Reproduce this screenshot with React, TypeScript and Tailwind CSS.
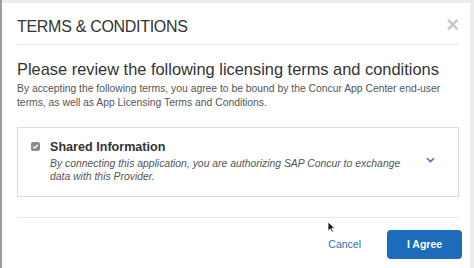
import React from "react";

export default function App() {
  return (
    <div
      className="relative w-[474px] h-[268px] bg-[#ececec] border-l-2 border-[#9d9d9d] pt-[3px] pr-[4px] overflow-hidden"
      style={{ fontFamily: '"Liberation Sans", Arial, sans-serif' }}
    >
      <div className="h-full bg-white pl-[15px] pr-[11px] flex flex-col">
        <div className="flex items-center justify-between h-[42px] border-b border-[#e5e5e5] pt-[6px]">
          <h1 className="text-[16px] leading-[22px] text-[#333] tracking-[-0.3px]">TERMS &amp; CONDITIONS</h1>
          <span className="text-[#c8c8c8] text-[22px] leading-none font-bold -mt-[4px]">×</span>
        </div>
        <div className="pt-[15px]">
          <p className="text-[16.4px] leading-[19px] text-[#333]">Please review the following licensing terms and conditions</p>
          <p className="mt-[3px] text-[10.35px] leading-[14px] text-[#555]">
            By accepting the following terms, you agree to be bound by the Concur App Center end-user terms, as well as App Licensing Terms and Conditions.
          </p>
        </div>
        <div className="mt-[17px] h-[70px] border border-[#dcdcdc] flex items-start pl-[13px] pr-[23px] pt-[11px]">
          <div className="mt-[3px] w-[9px] h-[9px] rounded-[2px] bg-[#8a8a8a] flex items-center justify-center">
            <svg width="7" height="7" viewBox="0 0 8 8">
              <path d="M1.5 4.2 L3.2 5.8 L6.5 2" stroke="white" strokeWidth="1.5" fill="none" />
            </svg>
          </div>
          <div className="ml-[10px] flex-1">
            <div className="text-[12.6px] leading-[16px] font-bold text-[#333]">Shared Information</div>
            <div className="mt-[2px] text-[10.4px] leading-[13px] italic text-[#555] w-[360px]">
              By connecting this application, you are authorizing SAP Concur to exchange data with this Provider.
            </div>
          </div>
          <svg className="mt-[18px]" width="9" height="6" viewBox="0 0 9 6">
            <path d="M1 1.2 L4.5 4.6 L8 1.2" stroke="#3a7bc4" strokeWidth="1.6" fill="none" />
          </svg>
        </div>
        <div className="mt-[20px] border-t border-[#e5e5e5] flex items-center justify-end pt-[12px]">
          <span className="text-[10.5px] text-[#2f6fb3] mr-[26px]">Cancel</span>
          <button className="w-[75px] h-[29px] rounded-[4px] bg-[#1d6bbb] text-white text-[10.5px] font-bold -mr-[3px]">I Agree</button>
        </div>
      </div>
      <svg className="absolute left-[325px] top-[221px]" width="9" height="12" viewBox="0 0 9 12">
        <path d="M1 1 L1 10 L3.3 7.8 L5 11.2 L6.4 10.5 L4.8 7.3 L7.8 7.3 Z" fill="#111" stroke="white" strokeWidth="0.8" />
      </svg>
    </div>
  );
}
